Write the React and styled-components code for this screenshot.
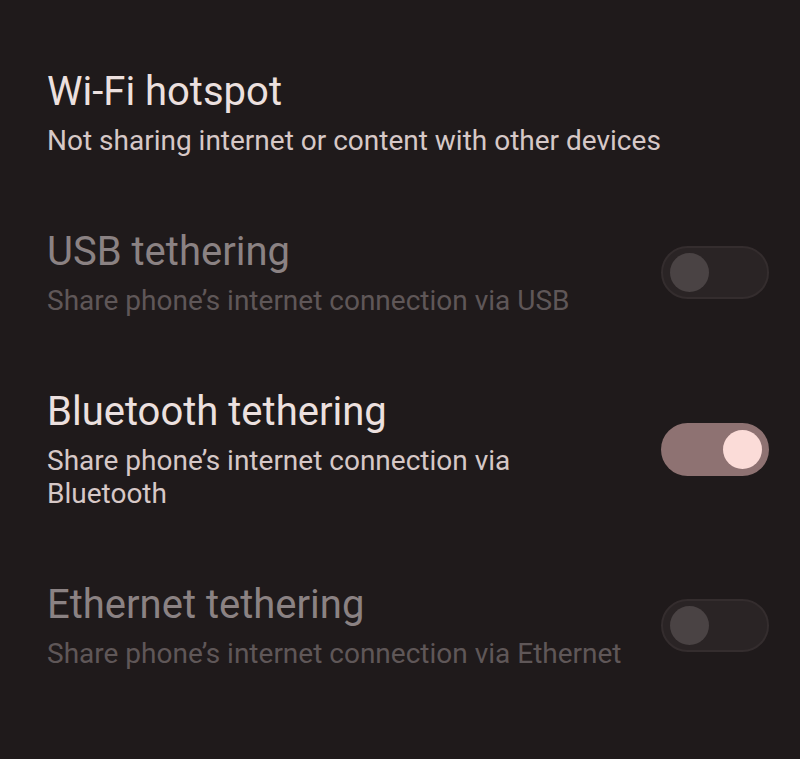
import React from 'react';
import styled, { createGlobalStyle } from 'styled-components';

const GlobalStyle = createGlobalStyle`
  html, body {
    margin: 0;
    padding: 0;
    background: #1f1a1b;
  }
  body {
    font-family: Roboto, "Noto Sans", sans-serif;
  }
`;

const rows = [
  {
    id: 'wifi',
    title: 'Wi-Fi hotspot',
    summary: 'Not sharing internet or content with other devices',
    enabled: true,
    toggle: null,
  },
  {
    id: 'usb',
    title: 'USB tethering',
    summary: 'Share phone’s internet connection via USB',
    enabled: false,
    toggle: false,
  },
  {
    id: 'bt',
    title: 'Bluetooth tethering',
    summary: 'Share phone’s internet connection via Bluetooth',
    enabled: true,
    toggle: true,
  },
  {
    id: 'eth',
    title: 'Ethernet tethering',
    summary: 'Share phone’s internet connection via Ethernet',
    enabled: false,
    toggle: false,
  },
];

export default function App() {
  return (
    <Page>
      <GlobalStyle />
      {rows.map((row) => (
        <Row key={row.id}>
          <TextCol>
            <Title $enabled={row.enabled}>{row.title}</Title>
            <Summary $enabled={row.enabled}>{row.summary}</Summary>
          </TextCol>
          {row.toggle !== null && (
            <Switch $on={row.toggle} $enabled={row.enabled}>
              <Thumb $on={row.toggle} $enabled={row.enabled} />
            </Switch>
          )}
        </Row>
      ))}
    </Page>
  );
}

const Page = styled.div`
  width: 800px;
  height: 759px;
  padding-top: 33px;
  box-sizing: border-box;
  background: #1f1a1b;
  overflow: hidden;
`;

const Row = styled.div`
  display: flex;
  align-items: center;
  padding: 35px 31px 36px 47px;
`;

const TextCol = styled.div`
  flex: 1;
  min-width: 0;
  padding-right: 30px;
`;

const Title = styled.div`
  font-size: 40px;
  line-height: 48px;
  color: ${(p) => (p.$enabled ? '#ece0df' : '#8b8283')};
`;

const Summary = styled.div`
  margin-top: 8px;
  font-size: 28px;
  line-height: 33px;
  color: ${(p) => (p.$enabled ? '#d6c8c7' : '#5f5758')};
`;

const Switch = styled.div`
  flex: none;
  width: 108px;
  height: 53px;
  border-radius: 27px;
  box-sizing: border-box;
  display: flex;
  align-items: center;
  justify-content: ${(p) => (p.$on ? 'flex-end' : 'flex-start')};
  padding: 0 7px;
  background: ${(p) => (p.$on ? '#8e7272' : '#2a2425')};
  border: ${(p) => (p.$on ? 'none' : '2px solid #342d2e')};
`;

const Thumb = styled.div`
  width: 39px;
  height: 39px;
  border-radius: 50%;
  background: ${(p) => (p.$on ? '#fbdcd8' : '#4a4344')};
`;
